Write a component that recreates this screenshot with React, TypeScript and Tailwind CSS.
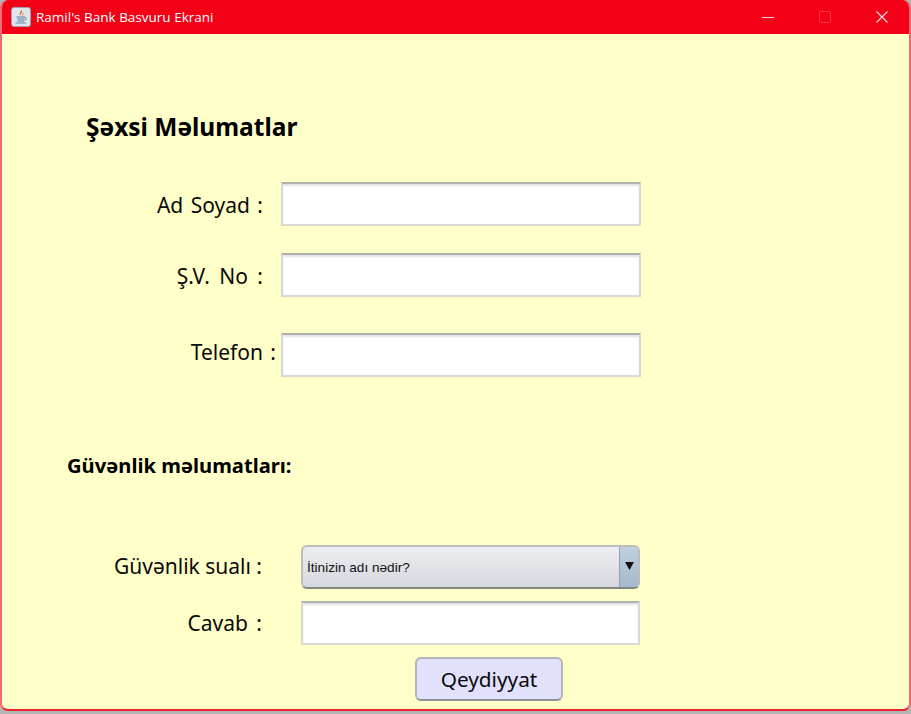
const tahoma = "font-['Noto_Sans','DejaVu_Sans',sans-serif]";
const labelText = `shrink-0 text-right text-[21px] leading-none text-[#0a0a0a] ${tahoma}`;

function JavaIcon() {
  return (
    <svg width="20" height="20" viewBox="0 0 20 20" className="shrink-0">
      <rect x="0.5" y="0.5" width="19" height="19" rx="2.5" fill="#dfe5ec" stroke="#9aa3ad" />
      <path d="M10.5 3 C12.5 5.5 8.5 6.5 10 9 C8 7.5 8.6 5.5 10.5 3 Z" fill="#d9662a" />
      <path d="M12.5 5.5 C11.5 6.5 11 7.5 11.6 9 C12.5 8 13 7 12.5 5.5 Z" fill="#e58a3c" />
      <path d="M5.5 10 H14 M6 12 H13.5 M6.5 14 H13" stroke="#5c7f9e" strokeWidth="1.2" fill="none" />
      <path d="M14 10.5 C16 10.5 16 13 13.5 13" stroke="#5c7f9e" strokeWidth="0.9" fill="none" />
      <path d="M4.5 16 H15" stroke="#6f8da8" strokeWidth="1.2" />
    </svg>
  );
}

function Input({ w }: { w: string }) {
  return (
    <div className={`${w} h-[44px] bg-white border-2 border-[#d8d8d4] border-t-[#b0b0ad] shadow-[inset_0_2px_2px_#e2e2e2]`} />
  );
}

export default function App() {
  return (
    <div className="w-[911px] h-[714px] bg-[#b4b4b4] overflow-hidden">
      <div className="w-[911px] h-[711px] rounded-[8px] overflow-hidden border-x-2 border-b-2 border-x-[#f36a72] border-b-[#f0202f] bg-[#ffffc9] flex flex-col">
        <div className="h-[34px] -mx-[2px] shrink-0 bg-[#f30016] flex items-center pl-[11px] text-white">
          <JavaIcon />
          <span className="ml-[5px] text-[13.5px] font-['Open_Sans','Noto_Sans',sans-serif]">Ramil's Bank Basvuru Ekrani</span>
          <div className="ml-auto flex items-center">
            <div className="w-[12px] h-px bg-[#ffd5d8] mr-[45px]" />
            <div className="w-[12px] h-[12px] rounded-[2px] border border-[#f9394a] mr-[45px]" />
            <svg width="12" height="12" viewBox="0 0 12 12" className="mr-[23px]">
              <path d="M0.5 0.5 L11.5 11.5 M11.5 0.5 L0.5 11.5" stroke="#ffdfe1" strokeWidth="1.1" />
            </svg>
          </div>
        </div>

        <div className="flex-1 flex flex-col">
          <h1 className={`ml-[84px] mt-[75px] h-[36px] leading-[36px] text-[24.5px] font-bold text-black ${tahoma}`}>Şəxsi Məlumatlar</h1>
          <div className="flex items-center mt-[37px]">
            <div className={`w-[261px] pt-[3px] [word-spacing:2px] ${labelText}`}>Ad Soyad :</div>
            <div className="ml-[18px]"><Input w="w-[360px]" /></div>
          </div>
          <div className="flex items-center mt-[27px]">
            <div className={`w-[261px] pt-[2px] [word-spacing:4px] ${labelText}`}>Ş.V. No :</div>
            <div className="ml-[18px]"><Input w="w-[360px]" /></div>
          </div>
          <div className="flex items-center mt-[36px]">
            <div className={`w-[274px] pb-[6px] [word-spacing:2px] ${labelText}`}>Telefon :</div>
            <div className="ml-[5px]"><Input w="w-[360px]" /></div>
          </div>

          <h2 className={`ml-[65px] mt-[73px] h-[30px] leading-[30px] text-[20.2px] font-bold text-black ${tahoma}`}>Güvənlik məlumatları:</h2>

          <div className="flex items-center mt-[65px]">
            <div className={`w-[260px] pb-[2px] ${labelText}`}>Güvənlik sualı :</div>
            <div className="ml-[39px] w-[339px] h-[44px] flex rounded-[6px] border-2 border-[#bdbdbd] border-b-[#858585] overflow-hidden bg-gradient-to-b from-[#eceef1] to-[#d5d8de]">
              <div className="flex-1 flex items-center pl-[4px] pt-[2px] text-[13.6px] text-[#111] font-['Liberation_Sans',sans-serif]">İtinizin adı nədir?</div>
              <div className="w-[19px] flex justify-center pt-[15px] bg-gradient-to-b from-[#bfd0df] to-[#a5b9ca] border-l border-[#8f9faf]">
                <svg width="9" height="8" viewBox="0 0 10 9"><path d="M0 0 H10 L5 9 Z" fill="#111" /></svg>
              </div>
            </div>
          </div>
          <div className="flex items-center mt-[12px]">
            <div className={`w-[260px] [word-spacing:3px] ${labelText}`}>Cavab :</div>
            <div className="ml-[39px]"><Input w="w-[339px]" /></div>
          </div>
          <button className={`ml-[413px] mt-[12px] w-[148px] h-[44px] rounded-[6px] border-2 border-[#b4b4bc] border-b-[#8f8f96] bg-[#e1e1fd] pt-[2px] text-[20.8px] text-[#0a0a0a] ${tahoma}`}>Qeydiyyat</button>
        </div>
      </div>
    </div>
  );
}
